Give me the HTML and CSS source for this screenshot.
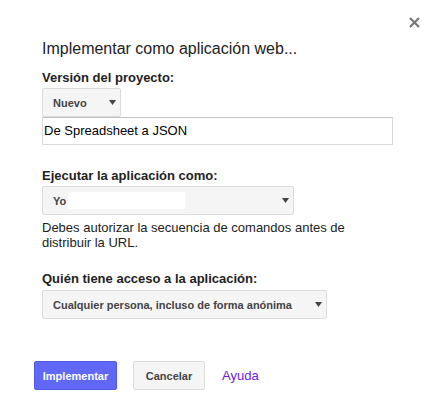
FILE: index.html
```html
<!DOCTYPE html>
<html lang="es">
<head>
<meta charset="utf-8">
<title>Implementar como aplicación web</title>
<link rel="stylesheet" href="styles.css">
</head>
<body>
<div class="dialog">
  <button class="close" aria-label="Cerrar">
    <svg width="11" height="11" viewBox="0 0 11 11"><path d="M1 1 L10 10 M10 1 L1 10" stroke="#777" stroke-width="2.2" fill="none"/></svg>
  </button>
  <div class="content">
    <h1 class="title">Implementar como aplicación web...</h1>

    <div class="field field-version">
      <div class="label">Versión del proyecto:</div>
      <div class="select select-version">
        <span class="select-text">Nuevo</span>
        <svg class="arrow" width="7" height="5" viewBox="0 0 7 5"><path d="M0 0 H7 L3.5 5 Z" fill="#444"/></svg>
      </div>
      <div class="input">De Spreadsheet a JSON</div>
    </div>

    <div class="field field-run">
      <div class="label">Ejecutar la aplicación como:</div>
      <div class="select select-run">
        <span class="select-text">Yo <span class="redacted"></span></span>
        <svg class="arrow" width="7" height="5" viewBox="0 0 7 5"><path d="M0 0 H7 L3.5 5 Z" fill="#444"/></svg>
      </div>
      <p class="help">Debes autorizar la secuencia de comandos antes de distribuir la URL.</p>
    </div>

    <div class="field field-access">
      <div class="label label-access">Quién tiene acceso a la aplicación:</div>
      <div class="select select-access">
        <span class="select-text">Cualquier persona, incluso de forma anónima</span>
        <svg class="arrow" width="7" height="5" viewBox="0 0 7 5"><path d="M0 0 H7 L3.5 5 Z" fill="#444"/></svg>
      </div>
    </div>
  </div>

  <div class="buttons">
    <button class="btn btn-primary">Implementar</button>
    <button class="btn btn-default">Cancelar</button>
    <a class="help-link" href="#">Ayuda</a>
  </div>
</div>
</body>
</html>
```

FILE: styles.css
```css
* { box-sizing: border-box; }

html, body {
  margin: 0;
  padding: 0;
  background: #fff;
}

body {
  font-family: Arial, "Liberation Sans", sans-serif;
  color: #222;
  width: 440px;
  height: 413px;
  overflow: hidden;
}

.dialog {
  position: relative;
  padding-top: 39px;
  width: 440px;
  height: 413px;
}

.close {
  position: absolute;
  top: 17px;
  left: 409px;
  width: 11px;
  height: 11px;
  padding: 0;
  border: 0;
  background: none;
  display: block;
}
.close svg { display: block; }

.content {
  padding-left: 42px;
}

.title {
  margin: 0;
  font-size: 16px;
  line-height: 20px;
  font-weight: normal;
  color: #222;
}

.field-version { margin-top: 11px; }
.field-run { margin-top: 23px; }
.field-access { margin-top: 21px; }

.label {
  font-size: 13px;
  font-weight: bold;
  line-height: 16px;
  margin-bottom: 2px;
  color: #222;
}
.label-access { margin-bottom: 3px; }

.select {
  display: flex;
  align-items: center;
  justify-content: space-between;
  height: 29px;
  padding: 0 4px 0 10px;
  background: #f5f5f5;
  border: 1px solid #dcdcdc;
  border-radius: 2px;
  font-size: 11px;
  font-weight: bold;
  color: #444;
}
.select .arrow { display: block; margin-top: -1px; }

.select-version { width: 79px; }
.select-run { width: 252px; }
.select-access { width: 285px; }

.select-text {
  display: flex;
  align-items: center;
  white-space: nowrap;
}

.redacted {
  display: inline-block;
  width: 117px;
  height: 17px;
  margin-left: 2px;
  background: #fff;
}

.input {
  width: 351px;
  height: 28px;
  border: 1px solid #d9d9d9;
  border-top-color: #c0c0c0;
  padding: 0 1px;
  font-size: 13px;
  line-height: 26px;
  color: #000;
}

.help {
  margin: 5px 0 0;
  width: 330px;
  font-size: 13px;
  line-height: 15px;
  color: #222;
}

.buttons {
  display: flex;
  align-items: center;
  margin-top: 42px;
  padding-left: 34px;
}

.btn {
  height: 29px;
  border-radius: 2px;
  font-family: Arial, "Liberation Sans", sans-serif;
  font-size: 11px;
  font-weight: bold;
  padding: 0;
  text-align: center;
}

.btn-primary {
  width: 83px;
  background: #6168f5;
  border: 1px solid #5158e6;
  color: #fff;
}

.btn-default {
  width: 72px;
  margin-left: 16px;
  background: #f5f5f5;
  border: 1px solid #dcdcdc;
  color: #444;
}

.help-link {
  margin-left: 17px;
  font-size: 13px;
  color: #6a22dc;
  text-decoration: none;
}
```
